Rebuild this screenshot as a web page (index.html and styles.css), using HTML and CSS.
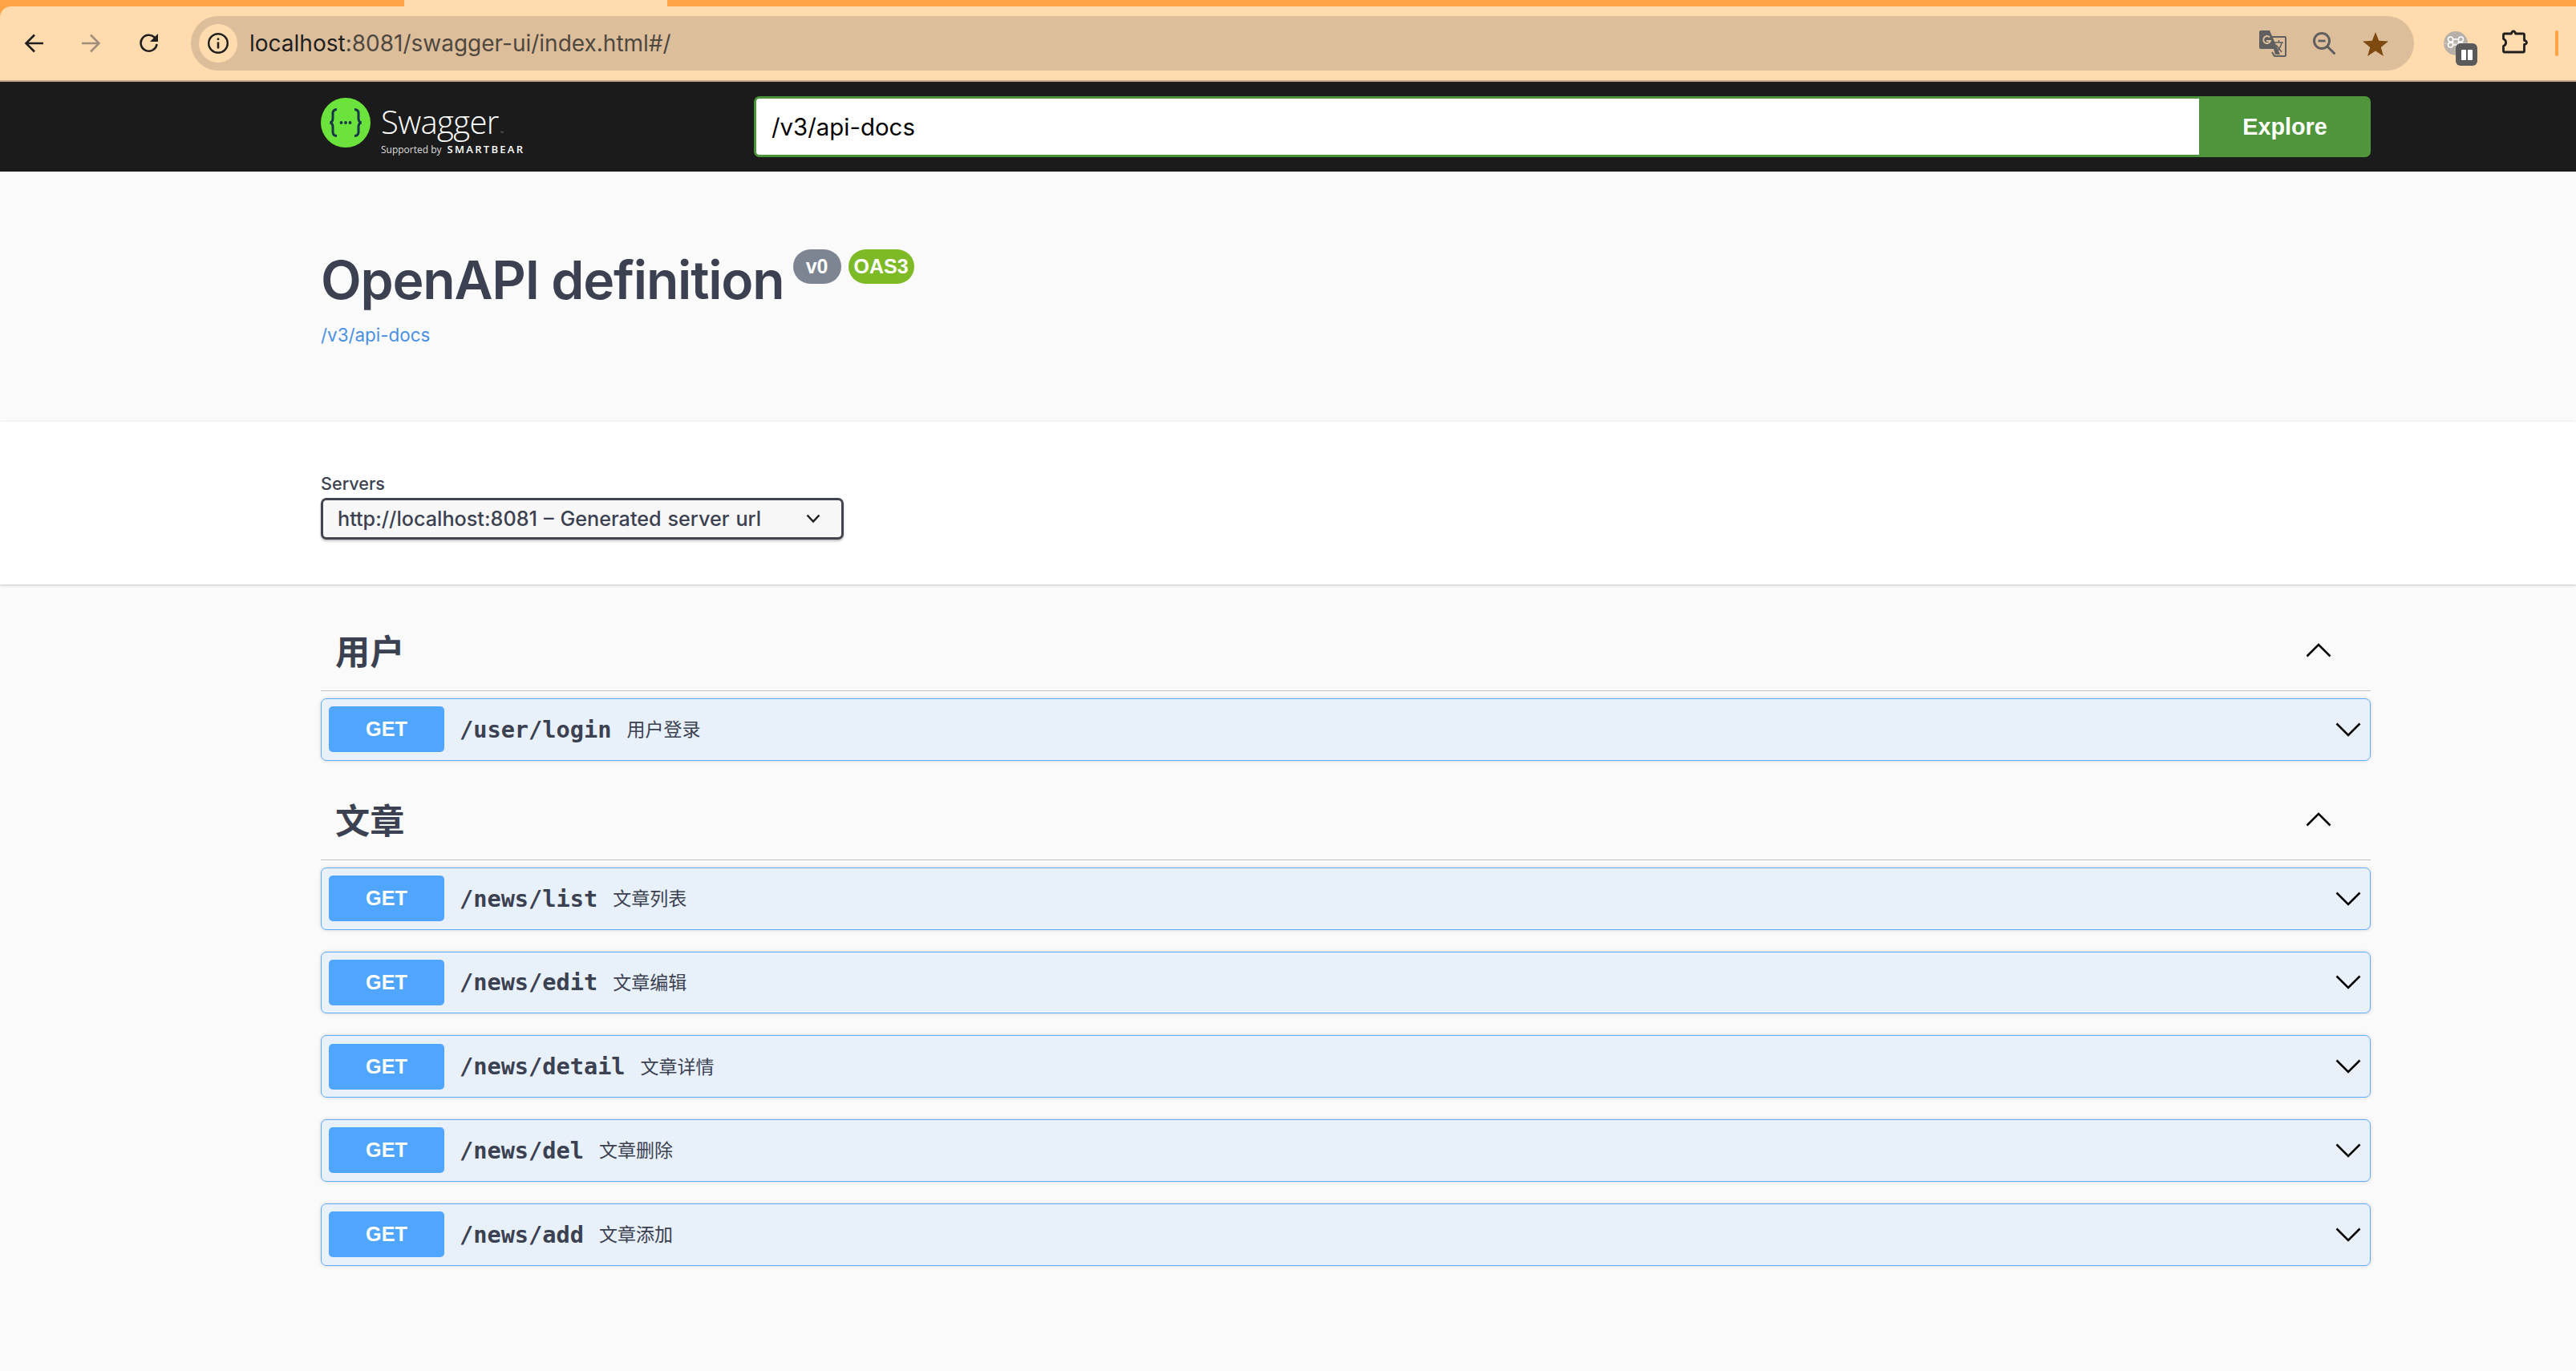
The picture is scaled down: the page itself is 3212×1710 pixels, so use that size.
FILE: index.html
```html
<!DOCTYPE html>
<html lang="zh">
<head>
<meta charset="utf-8">
<title>Swagger UI</title>
<link rel="stylesheet" href="styles.css">
</head>
<body>
<div class="chrome">
  <div class="tabstrip"><span class="tab-left"></span><span class="tab-gap"></span></div>
  <div class="toolbar">
    <svg class="navicon" viewBox="0 0 24 24"><path d="M24 12H3M13 1.500L2.500 12 13 22.500" fill="none" stroke="#1f1f1f" stroke-width="2.600"/></svg>
    <svg class="navicon" viewBox="0 0 24 24"><path d="M0 12h21M11 1.500L21.500 12 11 22.500" fill="none" stroke="#a08f7c" stroke-width="2.600"/></svg>
    <svg class="navicon" viewBox="0 0 24 24"><path d="M21.500 13a10 10 0 1 1-3-8.500L22 8" fill="none" stroke="#1f1f1f" stroke-width="2.600"/><path d="M23 0v10h-10z" fill="#1f1f1f"/></svg>
    <div class="omnibox">
      <span class="site-info"><svg viewBox="0 0 28 28" class="info-icon"><circle cx="14" cy="14" r="11.800" fill="none" stroke="#1f1f1f" stroke-width="2.400"/><path d="M14 12.500v8M14 7.500v2.600" stroke="#1f1f1f" stroke-width="2.600"/></svg></span>
      <span class="url"><span class="url-host">localhost</span>:8081/swagger-ui/index.html#/</span>
      <svg class="omni-translate" viewBox="0 0 34 33"><path d="M2 0h11l13 30-6 0-2-7H2a2 2 0 0 1-2-2V2a2 2 0 0 1 2-2z" fill="#5f5f5f"/><path d="M14 8h18a1 1 0 0 1 1 1v22a1 1 0 0 1-1 1H19l-3-5" fill="none" stroke="#5f5f5f" stroke-width="2"/><path d="M13 8.500a4.500 4.500 0 1 0 1 4.500H9" fill="none" stroke="#dcbe9b" stroke-width="2"/><path d="M19 15h11M24.500 12v3M28 15c-1 5-3 9-7 12M21 18l7 9" fill="none" stroke="#5f5f5f" stroke-width="1.500"/></svg>
      <svg class="omni-zoom" viewBox="0 0 28 28"><circle cx="11" cy="11" r="9.500" fill="none" stroke="#5f5f5f" stroke-width="3"/><path d="M6.500 11h9" stroke="#5f5f5f" stroke-width="2.800"/><path d="M18 18l8.500 8.500" stroke="#5f5f5f" stroke-width="3" stroke-linecap="round"/></svg>
      <svg class="omni-star" viewBox="0 0 32 30"><path d="M16 0l4.200 10.800 11.800.7-9.200 7.400L25.900 30 16 23.600 6.100 30l3.100-11.100L0 11.500l11.800-.7z" fill="#7f4a10"/></svg>
    </div>
    <div class="ext">
      <svg class="ext-circle" viewBox="0 0 30 30"><circle cx="15" cy="15" r="15" fill="#b6b0a9"/><path d="M0 15h30" stroke="#dcd3c8" stroke-width="1"/><path d="M11.500 10h7v7h-7zM11.500 10a3 3 0 1 0-3 3h3M18.500 10a3 3 0 1 1 3 3h-3M11.500 17a3 3 0 1 1-3-3h3M18.500 17a3 3 0 1 0 3-3h-3" fill="none" stroke="#fff" stroke-width="1.600"/></svg>
      <span class="pause-badge"><span class="pause-bar"></span><span class="pause-bar"></span></span>
    </div>
    <svg class="puzzle" viewBox="0 0 32 31"><path d="M3 6h8.500a2.500 3 0 0 1 5 0H26a1.500 1.500 0 0 1 1.500 1.500v7a3 2.500 0 0 1 0 5v8a1.500 1.500 0 0 1-1.500 1.500H3a1.500 1.500 0 0 1-1.500-1.500v-6a5.500 5 0 0 0 0-9V7.500A1.500 1.500 0 0 1 3 6z" fill="none" stroke="#1f1f1f" stroke-width="2.800" stroke-linejoin="round"/></svg>
    <span class="update-bar"></span>
  </div>
</div>

<header class="topbar">
  <div class="wrap topbar-inner">
    <div class="logo">
      <svg class="logo-mark" viewBox="0 0 62 62"><circle cx="31" cy="31" r="31" fill="#6be33c"/><path d="M20 14.500c-4 0-5 2-5 5v6c0 3-1 5-3.500 5.500 2.500.5 3.500 2.500 3.500 5.500v6c0 3 1 5 5 5M42 14.500c4 0 5 2 5 5v6c0 3 1 5 3.500 5.500-2.500.5-3.500 2.500-3.500 5.500v6c0 3-1 5-5 5" fill="none" stroke="#173647" stroke-width="3"/><circle cx="25.500" cy="31" r="1.900" fill="#173647"/><circle cx="31" cy="31" r="1.900" fill="#173647"/><circle cx="36.500" cy="31" r="1.900" fill="#173647"/></svg>
      <div class="logo-text">
        <div class="logo-name">Swagger<span class="logo-tm">™</span></div>
        <div class="logo-sub"><span class="logo-by">Supported by</span><span class="logo-bear">SMARTBEAR</span></div>
      </div>
    </div>
    <form class="download-form">
      <span class="url-input">/v3/api-docs</span>
      <span class="explore">Explore</span>
    </form>
  </div>
</header>

<section class="info">
  <div class="wrap">
    <div class="title-row">
      <h1 class="title">OpenAPI definition</h1>
      <span class="badge badge-version">v0</span>
      <span class="badge badge-oas">OAS3</span>
    </div>
    <a class="spec-link">/v3/api-docs</a>
  </div>
</section>

<section class="servers">
  <div class="wrap">
    <div class="servers-label">Servers</div>
    <div class="server-select">
      <span>http://localhost:8081 – Generated server url</span>
      <svg class="select-caret" viewBox="0 0 18 12"><path d="M1.500 1.500L9 9.500l7.500-8" fill="none" stroke="#1f1f1f" stroke-width="2.500"/></svg>
    </div>
  </div>
</section>

<main class="wrap ops">
  <section class="tag-section">
    <div class="tag-head">
      <h3 class="tag-name">用户</h3>
      <svg class="tag-arrow" viewBox="0 0 32 18"><path d="M1.500 16.500L16 2l14.500 14.500" fill="none" stroke="#000" stroke-width="2.600"/></svg>
    </div>
    <div class="op">
      <span class="method">GET</span><span class="path">/user/login</span><span class="desc">用户登录</span>
      <svg class="op-arrow" viewBox="0 0 32 18"><path d="M1.500 1.500L16 16 30.500 1.500" fill="none" stroke="#000" stroke-width="2.600"/></svg>
    </div>
  </section>
  <section class="tag-section">
    <div class="tag-head">
      <h3 class="tag-name">文章</h3>
      <svg class="tag-arrow" viewBox="0 0 32 18"><path d="M1.500 16.500L16 2l14.500 14.500" fill="none" stroke="#000" stroke-width="2.600"/></svg>
    </div>
    <div class="op">
      <span class="method">GET</span><span class="path">/news/list</span><span class="desc">文章列表</span>
      <svg class="op-arrow" viewBox="0 0 32 18"><path d="M1.500 1.500L16 16 30.500 1.500" fill="none" stroke="#000" stroke-width="2.600"/></svg>
    </div>
    <div class="op">
      <span class="method">GET</span><span class="path">/news/edit</span><span class="desc">文章编辑</span>
      <svg class="op-arrow" viewBox="0 0 32 18"><path d="M1.500 1.500L16 16 30.500 1.500" fill="none" stroke="#000" stroke-width="2.600"/></svg>
    </div>
    <div class="op">
      <span class="method">GET</span><span class="path">/news/detail</span><span class="desc">文章详情</span>
      <svg class="op-arrow" viewBox="0 0 32 18"><path d="M1.500 1.500L16 16 30.500 1.500" fill="none" stroke="#000" stroke-width="2.600"/></svg>
    </div>
    <div class="op">
      <span class="method">GET</span><span class="path">/news/del</span><span class="desc">文章删除</span>
      <svg class="op-arrow" viewBox="0 0 32 18"><path d="M1.500 1.500L16 16 30.500 1.500" fill="none" stroke="#000" stroke-width="2.600"/></svg>
    </div>
    <div class="op">
      <span class="method">GET</span><span class="path">/news/add</span><span class="desc">文章添加</span>
      <svg class="op-arrow" viewBox="0 0 32 18"><path d="M1.500 1.500L16 16 30.500 1.500" fill="none" stroke="#000" stroke-width="2.600"/></svg>
    </div>
  </section>
</main>
</body>
</html>
```

FILE: styles.css
```css
* { box-sizing: border-box; }
html, body { margin: 0; padding: 0; }
body {
  width: 3212px;
  height: 1710px;
  overflow: hidden;
  background: #fafafa;
  font-family: Inter, "Liberation Sans", "Noto Sans CJK SC", sans-serif;
  color: #3b4151;
}
.wrap { width: 2556px; margin-left: 400px; }

/* browser chrome */
.chrome { height: 102px; background: #ffa347; border-bottom: 2px solid #c4a88a; }
.tabstrip { display: flex; height: 8px; }
.tab-left { width: 504px; background: #ffa347; border-radius: 0 0 14px 0; }
.tab-gap { width: 328px; background: #ffdbae; }
.toolbar { display: flex; align-items: center; height: 92px; padding-left: 30px; background: #ffdbae; border-top-left-radius: 14px; }
.navicon { width: 24px; height: 24px; margin-right: 48px; flex: none; }
.navicon:nth-of-type(3) { margin-right: 40px; }
.omnibox {
  display: flex; align-items: center;
  width: 2772px; height: 68px;
  background: #dcbe9b; border-radius: 34px; padding: 0 32px 0 10px;
}
.site-info { display: flex; align-items: center; justify-content: center; width: 48px; height: 48px; border-radius: 50%; background: #ffdbae; flex: none; }
.info-icon { width: 28px; height: 28px; }
.url { font-size: 28px; color: #4f483f; margin-left: 15px; flex: 1; }
.url-host { color: #1f1f1f; }
.omni-translate { width: 34px; height: 33px; margin-right: 33px; flex: none; }
.omni-zoom { width: 28px; height: 28px; margin-right: 34px; flex: none; }
.omni-star { width: 32px; height: 30px; flex: none; margin-top: 2px; }
.ext { position: relative; width: 30px; height: 30px; margin-left: 37px; flex: none; }
.ext-circle { width: 30px; height: 30px; display: block; }
.pause-badge { position: absolute; left: 15px; top: 15px; width: 27px; height: 28px; border-radius: 6px; background: #5a5a5a; display: flex; align-items: center; justify-content: center; gap: 2px; }
.pause-bar { width: 6px; height: 13px; background: #fff; border-radius: 1px; }
.puzzle { width: 32px; height: 31px; margin-left: 43px; margin-top: -5px; flex: none; }
.update-bar { width: 4px; height: 32px; background: #ffa347; border-radius: 2px; margin-left: 34px; flex: none; }

/* swagger top bar */
.topbar { height: 112px; background: #1b1b1b; display: flex; align-items: center; }
.topbar-inner { display: flex; align-items: center; }
.logo { display: flex; align-items: flex-start; width: 540px; height: 76px; flex: none; }
.logo-mark { width: 62px; height: 62px; flex: none; margin-top: 2px; }
.logo-text { margin-left: 13px; color: #fff; font-family: "Open Sans", sans-serif; }
.logo-name { font-size: 40px; line-height: 44px; font-weight: 300; letter-spacing: -0.600px; margin-top: 10px; }
.logo-tm { font-size: 6px; letter-spacing: 0; vertical-align: -1px; margin-left: 2px; color: #999; }
.logo-sub { display: flex; align-items: baseline; margin-top: -9px; line-height: 14px; white-space: nowrap; }
.logo-by { font-size: 12px; color: #ddd; }
.logo-bear { font-size: 13px; font-weight: 600; letter-spacing: 2.300px; margin-left: 7px; }
.download-form { display: flex; flex: 1; height: 76px; }
.url-input {
  flex: 1; display: flex; align-items: center;
  background: #fff; border: 3px solid #49933a; border-right: 0; border-radius: 7px 0 0 7px;
  padding-left: 19px; font-size: 29.400px; color: #000;
}
.explore {
  width: 214px; display: flex; align-items: center; justify-content: center;
  background: #4f953c; color: #fff; font-family: "Liberation Sans", sans-serif; font-size: 28.800px; font-weight: 700; border-radius: 0 7px 7px 0;
}

/* info */
.info { height: 312px; padding-top: 97px; background: #fafafa; }
.title-row { display: flex; align-items: flex-start; height: 76px; }
.title { margin: 0; font-size: 66px; line-height: 76px; font-weight: 600; letter-spacing: -1.200px; color: #3b4151; white-space: nowrap; }
.badge { display: inline-flex; align-items: center; justify-content: center; height: 43px; border-radius: 22px; color: #fff; font-family: "Liberation Sans", sans-serif; font-weight: 700; font-size: 25px; flex: none; }
.badge-version { width: 60px; background: #7d8492; margin-left: 11px; }
.badge-oas { width: 82px; background: #7eba26; margin-left: 9px; }
.spec-link { display: block; margin-top: 16px; font-size: 22.400px; line-height: 30px; color: #4990e2; }

/* servers */
.servers { height: 203px; padding-top: 64px; background: #fff; box-shadow: 0 1px 3px rgba(0,0,0,.22); }
.servers-label { font-size: 21.600px; line-height: 26px; font-weight: 500; color: #3b4151; }
.server-select {
  display: flex; align-items: center; justify-content: space-between;
  width: 652px; height: 52px; margin-top: 5px; padding: 0 26px 0 18px;
  background: #f7f7f7; border: 3px solid #41444e; border-radius: 7px;
  box-shadow: 0 2px 3px rgba(0,0,0,.25);
  font-size: 25.200px; font-weight: 500; word-spacing: 1.200px; color: #3b4151;
}
.select-caret { width: 18px; height: 12px; flex: none; }

/* operations */
.ops { padding-top: 35px; }
.tag-section { margin-bottom: 26px; }
.tag-head {
  display: flex; align-items: center; justify-content: space-between;
  height: 98px; padding: 0 17px 5px 18px; border-bottom: 1px solid #c3c3c3;
}
.tag-name { margin: 0; font-size: 43.200px; font-weight: 700; color: #3b4151; font-family: "Noto Sans CJK SC", sans-serif; }
.tag-arrow { width: 32px; height: 18px; margin: 2px 32px 0 0; flex: none; }
.op {
  display: flex; align-items: center;
  height: 77.750px; margin-top: 9px; padding: 0 11px 0 9px;
  background: #e8f0fa; border: 1px solid #5fabf5; border-radius: 7px;
  box-shadow: 0 0 5px rgba(0,0,0,.14);
}
.op + .op { margin-top: 27px; }
.method {
  width: 144px; height: 57px; display: flex; align-items: center; justify-content: center;
  background: #50a6fe; border-radius: 5px; color: #fff; font-family: "Liberation Sans", sans-serif; font-size: 25.200px; font-weight: 700;
  flex: none;
}
.path { margin-left: 19px; font-family: "DejaVu Sans Mono", monospace; font-weight: 700; font-size: 28.600px; color: #3b4151; }
.desc { margin: -3px 0 0 19px; font-size: 23px; color: #3b4151; font-family: "Noto Sans CJK SC", sans-serif; flex: 1; }
.op-arrow { width: 32px; height: 18px; flex: none; }
```
